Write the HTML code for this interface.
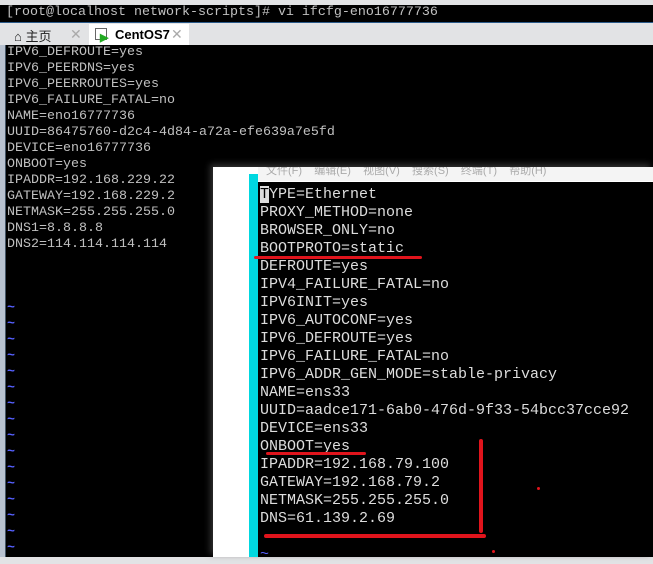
<!DOCTYPE html>
<html><head><meta charset="utf-8"><style>
*{margin:0;padding:0;box-sizing:border-box}
body{width:653px;height:557px;overflow:hidden;background:#e2e3e5;position:relative;font-family:"Liberation Mono",monospace}
.top{position:absolute;left:0;top:5px;width:653px;height:18px;background:#000;color:#c0c0c0;font-size:13.33px;line-height:16px;padding-left:6px;border-bottom:1px solid #2a5a8a}
.tabs{position:absolute;left:0;top:23px;width:653px;height:22px;background:#e2e3e5}
.tab1{position:absolute;left:6px;top:1px;width:80px;height:21px;font:13px "Liberation Sans","Noto Sans CJK SC",sans-serif;color:#222;padding:2px 0 0 8px}
.tab2{position:absolute;left:89px;top:1px;width:100px;height:21px;background:#fff;font:bold 13px "Liberation Sans",sans-serif;color:#000;padding:3px 0 0 26px}
.x{position:absolute;color:#aaa;font-weight:normal;font-size:14px}
.left{position:absolute;left:5px;top:45px;width:648px;height:512px;background:#000;border-left:1px solid #456;color:#c0c0c0;font-size:13.33px;line-height:16px;padding-left:1px;white-space:pre}
.leftstrip{position:absolute;left:0;top:45px;width:5px;height:512px;background:#b8c2d0}
.tl{color:#5560ff;font-weight:bold}
.ov{position:absolute;left:213px;top:167px;width:440px;height:390px;background:#fff;box-shadow:-3px -3px 6px rgba(60,60,60,.8)}
.cyan{position:absolute;left:249px;top:174px;width:9px;height:383px;background:#00d8e0}
.menu{position:absolute;left:258px;top:167px;width:395px;height:14px;background:#f4f4f4;color:#aaa;font:11px "Liberation Sans","Noto Sans CJK SC",sans-serif;line-height:8px;overflow:hidden;white-space:pre;padding-left:8px}
.term{position:absolute;left:258px;top:182px;width:395px;height:375px;background:#000;color:#ddd;font-size:15px;line-height:18px;padding:4px 0 0 2px;white-space:pre}
.cur{background:#ddd;color:#000}
.r{position:absolute;background:#e0141c;border-radius:2px}
</style></head><body>
<div class="top">[root@localhost network-scripts]# vi ifcfg-eno16777736</div>
<div class="tabs">
<div class="tab1">⌂ 主页<span class="x" style="left:64px;top:2px">✕</span></div>
<div class="tab2"><span style="position:absolute;left:6px;top:4px;width:12px;height:12px;border:1px solid #666"></span><span style="position:absolute;left:11px;top:7px;color:#2a2;font-size:11px">▶</span>CentOS7<span class="x" style="left:82px;top:2px">✕</span></div>
</div>
<div class="leftstrip"></div>
<div class="left">IPV6_DEFROUTE=yes
IPV6_PEERDNS=yes
IPV6_PEERROUTES=yes
IPV6_FAILURE_FATAL=no
NAME=eno16777736
UUID=86475760-d2c4-4d84-a72a-efe639a7e5fd
DEVICE=eno16777736
ONBOOT=yes
IPADDR=192.168.229.22
GATEWAY=192.168.229.2
NETMASK=255.255.255.0
DNS1=8.8.8.8
DNS2=114.114.114.114
 
 
 
<span class="tl">~
~
~
~
~
~
~
~
~
~
~
~
~
~
~
~</span></div>
<div class="ov"></div>
<div class="cyan"></div>
<div class="menu">文件(F)    编辑(E)    视图(V)    搜索(S)    终端(T)    帮助(H)</div>
<div class="term"><span class="cur">T</span>YPE=Ethernet
PROXY_METHOD=none
BROWSER_ONLY=no
BOOTPROTO=static
DEFROUTE=yes
IPV4_FAILURE_FATAL=no
IPV6INIT=yes
IPV6_AUTOCONF=yes
IPV6_DEFROUTE=yes
IPV6_FAILURE_FATAL=no
IPV6_ADDR_GEN_MODE=stable-privacy
NAME=ens33
UUID=aadce171-6ab0-476d-9f33-54bcc37cce92
DEVICE=ens33
ONBOOT=yes
IPADDR=192.168.79.100
GATEWAY=192.168.79.2
NETMASK=255.255.255.0
DNS=61.139.2.69
 
<span style="color:#5560ff">~</span></div>
<div class="r" style="left:254px;top:256px;width:168px;height:3px"></div>
<div class="r" style="left:266px;top:452px;width:100px;height:3px"></div>
<div class="r" style="left:479px;top:439px;width:4px;height:94px"></div>
<div class="r" style="left:264px;top:534px;width:222px;height:4px"></div>
<div class="r" style="left:537px;top:487px;width:3px;height:3px"></div>
<div class="r" style="left:492px;top:550px;width:3px;height:3px"></div>
</body></html>
